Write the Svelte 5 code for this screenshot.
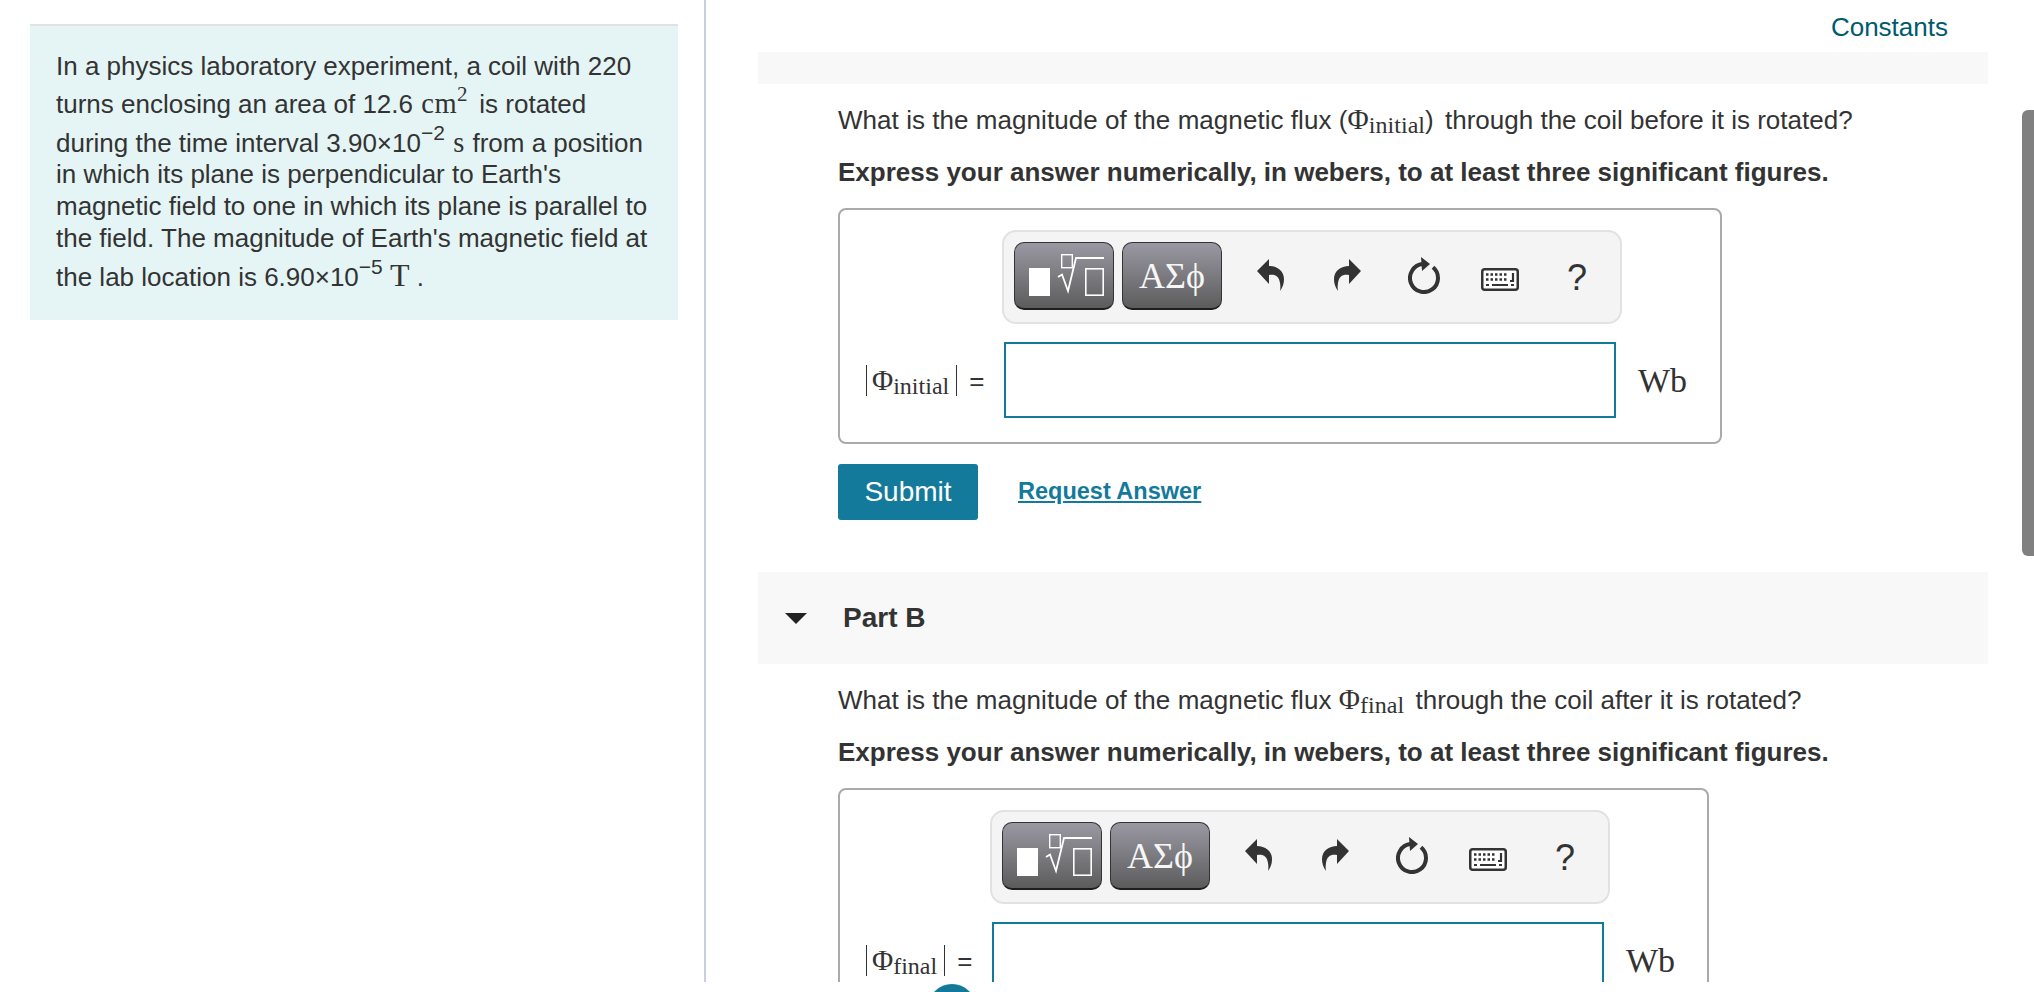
<script>
  const parts = [
    { sym: 'initial', paren: true, tail: ' through the coil before it is rotated?', box: 'box-a' },
    { sym: 'final', paren: false, tail: ' through the coil after it is rotated?', box: 'box-b' }
  ];
</script>

<div class="page">
  <aside class="left">
    <div class="intro">
      <div class="l1">In a physics laboratory experiment, a coil with 220</div>
      <div class="l2">turns enclosing an area of 12.6 <span class="m cm">cm<sup>2</sup></span> is rotated</div>
      <div class="l3">during the time interval 3.90×10<sup class="exp">−2</sup> <span class="m sec">s</span> from a position</div>
      <div class="l4">in which its plane is perpendicular to Earth's</div>
      <div class="l4">magnetic field to one in which its plane is parallel to</div>
      <div class="l4">the field. The magnitude of Earth's magnetic field at</div>
      <div class="l7">the lab location is 6.90×10<sup class="exp">−5</sup> <span class="m big">T</span> .</div>
    </div>
  </aside>

  <main class="right">
    <div class="constants">Constants</div>
    <div class="bar first"></div>

    {#each parts as p, i}
      {#if i === 1}
        <div class="bar partb"><span class="tri"></span><span class="ptitle">Part B</span></div>
      {/if}
      <div class="part">
        <p class="q">What is the magnitude of the magnetic flux {#if p.paren}(<span class="m phi">Φ<sub>{p.sym}</sub></span>){:else}<span class="m phi">Φ<sub>{p.sym}</sub></span>{/if}<span class="tail">{p.tail}</span></p>
        <p class="bold">Express your answer numerically, in webers, to at least three significant figures.</p>
        <div class="box {p.box}">
          <div class="tools">
            <button class="tb" aria-label="templates">
              <svg width="100" height="67" viewBox="0 0 100 67">
                <rect x="15" y="26" width="21" height="28" fill="#fff"/>
                <rect x="47.700" y="12.700" width="10.600" height="13" fill="none" stroke="#fff" stroke-width="1.400"/>
                <path d="M44 35l4-2.500 6 16.500 8-33h28" fill="none" stroke="#fff" stroke-width="1.800"/>
                <rect x="71.800" y="26.800" width="17.400" height="26.400" fill="none" stroke="#fff" stroke-width="1.600"/>
              </svg>
            </button>
            <button class="tb gr">ΑΣϕ</button>
            <svg class="ud" width="27" height="32" viewBox="0 0 27 32"><path d="M12 0L0 12l12 13v-9c6-1 10 1 11 8 .5 3 .5 5 0 8 3-4 4-8 4-12 0-8-7-13-15-13z" fill="#333"/></svg>
            <svg class="rd" width="27" height="32" viewBox="0 0 27 32"><path d="M15 0l12 12-12 13v-9c-6-1-10 1-11 8-.5 3-.5 5 0 8-3-4-4-8-4-12 0-8 7-13 15-13z" fill="#333"/></svg>
            <svg class="rs" width="32" height="37" viewBox="0 0 32 37"><path d="M14.500 7.100A14 14 0 1 0 25 10.300" fill="none" stroke="#333" stroke-width="4"/><path d="M13 0l9 7-8 7z" fill="#333"/></svg>
            <svg class="kb" width="38" height="23" viewBox="0 0 38 23">
              <rect x="1.250" y="1.250" width="35.500" height="20.500" rx="2.500" fill="#fff" stroke="#333" stroke-width="2.500"/>
              <path d="M5 6.500H27M5 11.500H27" stroke="#333" stroke-width="2.500" stroke-dasharray="2.500 2"/>
              <path d="M5 17h3M11 17H27M30 17h3M32 5v8h-3" fill="none" stroke="#333" stroke-width="2.200"/>
            </svg>
            <span class="help">?</span>
          </div>
          <div class="row">
            <span class="lab m"><span class="abs">Φ<sub>{p.sym}</sub></span><span class="eq">=</span></span>
            <div class="input"></div>
            <span class="unit m">Wb</span>
          </div>
        </div>
        {#if i === 0}
          <div class="actions">
            <button class="submit">Submit</button>
            <span class="req">Request Answer</span>
          </div>
        {/if}
      </div>
    {/each}
  </main>
  <div class="thumb"></div>
  <div class="fab"></div>
</div>

<style>
  :global(body) { margin: 0; background: #fff; }
  .page {
    position: relative;
    width: 2034px;
    height: 992px;
    overflow: hidden;
    display: grid;
    grid-template-columns: 706px 1fr;
    grid-template-rows: 982px;
    font-family: "Liberation Sans", Arial, sans-serif;
    color: #333;
    font-size: 26px;
  }
  .left {
    border-right: 2px solid #c8cfdf;
    padding: 24px 26px 0 30px;
    box-sizing: border-box;
    height: 982px;
  }
  .intro {
    background: #e5f5f5;
    border-top: 2px solid #e2e2e2;
    height: 296px;
    box-sizing: border-box;
    padding: 25px 20px 0 26px;
  }
  .intro > div { line-height: 31.500px; white-space: nowrap; }
  .intro .l1 { height: 34px; }
  .intro .l2 { height: 38px; padding-top: 3px; box-sizing: border-box; }
  .intro .l3 { height: 36px; padding-top: 4px; box-sizing: border-box; }
  .intro .l4 { height: 32px; }
  .intro .l7 { height: 36px; padding-top: 5px; box-sizing: border-box; }
  .m { font-family: "Liberation Serif", "DejaVu Serif", serif; font-size: 28.500px; }
  .cm { margin: 0 4px 0 1px; letter-spacing: 0.5px; }
  .sec { margin-left: 1px; margin-right: 1px; }
  .big { font-size: 32px; }
  sup { font-size: 21px; line-height: 0; position: relative; top: -2px; font-family: "Liberation Serif", serif; }
  sup.exp { font-family: "Liberation Sans", sans-serif; }
  .right {
    position: relative;
    height: 982px;
    overflow: hidden;
    padding: 0 46px 0 52px;
  }
  .constants {
    color: #005a6e;
    text-align: right;
    height: 52px;
    line-height: 54px;
    padding-right: 40px;
    font-size: 26px;
  }
  .bar { background: #f8f8f8; }
  .bar.first { height: 32px; }
  .bar.partb {
    height: 92px;
    display: flex;
    align-items: center;
  }
  .tri {
    width: 0; height: 0;
    margin-left: 27px;
    border-left: 11px solid transparent;
    border-right: 11px solid transparent;
    border-top: 11px solid #222;
  }
  .ptitle { font-weight: 700; font-size: 28px; margin-left: 36px; color: #333; }
  .part { padding: 0 0 0 80px; }
  .q { margin: 0; height: 70px; padding-top: 19px; box-sizing: border-box; line-height: 32px; white-space: nowrap; letter-spacing: 0.05px; }
  .tail { letter-spacing: 0; margin-left: 4px; }
  .phi { font-size: 29px; }
  sub { font-size: 24px; line-height: 0; position: relative; top: 4px; vertical-align: baseline; }
  .bold { margin: 0; font-weight: 700; height: 54px; line-height: 32px; padding-top: 2px; box-sizing: border-box; white-space: nowrap; font-size: 26px; }
  .box {
    box-sizing: border-box;
    border: 2px solid #aaa;
    border-radius: 8px;
    height: 236px;
    position: relative;
  }
  .box-a { width: 884px; }
  .box-b { width: 871px; }
  .box-a .tools { margin-left: 162px; }
  .box-b .tools { margin-left: 150px; }
  .tools {
    width: 620px;
    height: 94px;
    box-sizing: border-box;
    margin-top: 20px;
    background: #f4f4f4;
    border: 2px solid #e2e2e2;
    border-radius: 14px;
    display: flex;
    align-items: flex-start;
    padding: 10px 0 0 10px;
  }
  .tb {
    width: 100px;
    height: 68px;
    padding: 0;
    margin-right: 8px;
    border-radius: 10px;
    border: 1px solid #333;
    border-bottom: 2px solid #1e1e1e;
    background: linear-gradient(#9a99a3, #5c5c5c);
    box-sizing: border-box;
    display: block;
    flex: none;
  }
  .tb svg { display: block; margin: -1px 0 0 -1px; }
  .gr {
    color: #f6f6f6;
    font-family: "Liberation Serif", serif;
    font-size: 36px;
    line-height: 60px;
    text-align: center;
  }
  .ud { margin: 17px 0 0 27px; flex: none; }
  .rd { margin: 17px 0 0 50px; flex: none; }
  .rs { margin: 15px 0 0 47px; flex: none; }
  .kb { margin: 26px 0 0 41px; flex: none; }
  .help {
    margin: 16px 0 0 48px;
    font-size: 36px;
    line-height: 40px;
    color: #333;
  }
  .row {
    display: flex;
    align-items: flex-start;
    margin-top: 18px;
  }
  .lab {
    width: 164px;
    display: flex;
    align-items: center;
    box-sizing: border-box;
    padding-left: 26px;
    height: 76px;
    font-size: 29px;
    flex: none;
  }
  .box-b .lab { width: 152px; }
  .abs { border-left: 1.500px solid #333; border-right: 1.500px solid #333; padding: 0 7px 0 5px; line-height: 31px; margin-top: 1px; height: 31px; white-space: nowrap; }
  .eq { margin-left: 12px; font-family: "Liberation Sans", sans-serif; font-size: 26px; margin-top: 3px; }
  .input {
    width: 612px;
    height: 76px;
    box-sizing: border-box;
    border: 2px solid #147a9b;
    background: #fff;
    flex: none;
  }
  .unit { margin-left: 22px; font-size: 34px; line-height: 78px; }
  .actions { display: flex; align-items: center; margin-top: 20px; height: 56px; margin-bottom: 52px; }
  .submit {
    width: 140px;
    height: 56px;
    background: #147a9b;
    color: #fff;
    border: 0;
    border-radius: 3px;
    font: 28px "Liberation Sans", sans-serif;
  }
  .req {
    margin: -2px 0 0 40px;
    color: #147a9b;
    font-weight: 700;
    font-size: 23.500px;
    text-decoration: underline;
  }
  .thumb {
    position: absolute;
    right: 0;
    top: 110px;
    width: 12px;
    height: 446px;
    border-radius: 6px 0 0 6px;
    background: #808080;
  }
  .fab {
    position: absolute;
    left: 928px;
    top: 984px;
    width: 48px;
    height: 48px;
    border-radius: 50%;
    background: #147a9b;
  }
</style>
